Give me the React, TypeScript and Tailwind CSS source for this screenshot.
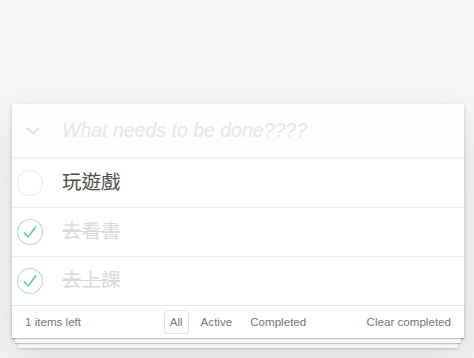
import React from "react";

const font = { fontFamily: '"Liberation Sans", "Noto Sans CJK TC", Arial, sans-serif' };

function Row({ text, done }: { text: string; done: boolean }) {
  return (
    <li className="h-[49px] flex items-center border-t border-[#ededed]">
      <div className="w-[50px] flex justify-start pl-[4px] shrink-0">
        <svg width="28" height="28" viewBox="0 0 28 28">
          <circle cx="14" cy="14" r="12.5" fill="none" stroke={done ? "#bddad5" : "#ededed"} strokeWidth="1.2" />
          {done && <path d="M8 14.5 L12.2 19 L20 8.5" fill="none" stroke="#5dc2af" strokeWidth="1.4" />}
        </svg>
      </div>
      <span
        className={
          "text-[19.5px] leading-none " +
          (done ? "text-[#d9d9d9] line-through" : "text-[#4d4d4d]")
        }
      >
        {text}
      </span>
    </li>
  );
}

export default function App() {
  return (
    <div className="min-h-[358px] w-full bg-[#f5f5f5] pt-[104px] pl-[12px]" style={font}>
      <section className="relative isolate w-[452px] bg-white shadow-[0_2px_4px_0_rgba(0,0,0,0.2),0_25px_50px_0_rgba(0,0,0,0.1)]">
        <header className="h-[54px] flex items-center bg-[#fefefe] shadow-[inset_0_-2px_1px_rgba(0,0,0,0.03)]">
          <div className="w-[50px] flex justify-start pl-[14px] shrink-0">
            <svg width="14" height="8" viewBox="0 0 14 8">
              <path d="M1 1 L7 6.5 L13 1" fill="none" stroke="#e3e3e3" strokeWidth="2" />
            </svg>
          </div>
          <span className="text-[19.5px] italic text-[#e6e6e6] leading-none">What needs to be done????</span>
        </header>
        <ul>
          <Row text="玩遊戲" done={false} />
          <Row text="去看書" done={true} />
          <Row text="去上課" done={true} />
        </ul>
        <footer className="relative h-[33px] flex items-center justify-between px-[13px] border-t border-[#e6e6e6] text-[11.6px] text-[#777]">
          <div className="absolute left-0 right-0 bottom-0 h-[33px] -z-10 shadow-[0_1px_1px_rgba(0,0,0,0.2),0_8px_0_-3px_#f6f6f6,0_9px_1px_-3px_rgba(0,0,0,0.2),0_16px_0_-6px_#f6f6f6,0_17px_2px_-6px_rgba(0,0,0,0.2)]" />
          <span className="relative">1 items left</span>
          <div className="absolute left-0 right-0 top-0 bottom-0 flex items-center justify-center">
            <span className="mx-[3px] px-[5px] py-[2px] border border-[#e3e3e3] rounded-[3px]">All</span>
            <span className="mx-[3px] px-[5px] py-[2px] border border-transparent">Active</span>
            <span className="mx-[3px] px-[5px] py-[2px] border border-transparent">Completed</span>
          </div>
          <span className="relative">Clear completed</span>
        </footer>
      </section>
    </div>
  );
}
